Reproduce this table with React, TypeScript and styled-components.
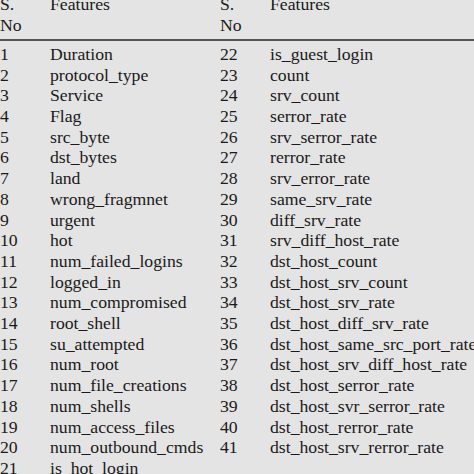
import React from 'react';
import styled, { createGlobalStyle } from 'styled-components';

const Global = createGlobalStyle`
  html, body {
    margin: 0;
    padding: 0;
    background: #e4e4e4;
    overflow: hidden;
  }
`;

const Page = styled.div`
  width: 474px;
  height: 474px;
  overflow: hidden;
  background: #e4e4e4;
  color: #1a1a1a;
  font-family: "Liberation Serif", "Times New Roman", serif;
  font-size: 17.7px;
  line-height: 20.7px;
`;

const Table = styled.div`
  margin-top: -6px;
`;

const Grid = styled.div`
  display: grid;
  grid-template-columns: 50px 170px 50px 1fr;
`;

const Head = styled(Grid)`
  padding-bottom: 3.5px;
  border-bottom: 2px solid #555;
`;

const Body = styled(Grid)`
  padding-top: 3px;
`;

const Cell = styled.div`
  white-space: nowrap;
`;

const features = [
  'Duration', 'protocol_type', 'Service', 'Flag', 'src_byte', 'dst_bytes', 'land',
  'wrong_fragmnet', 'urgent', 'hot', 'num_failed_logins', 'logged_in', 'num_compromised',
  'root_shell', 'su_attempted', 'num_root', 'num_file_creations', 'num_shells',
  'num_access_files', 'num_outbound_cmds', 'is_hot_login', 'is_guest_login', 'count',
  'srv_count', 'serror_rate', 'srv_serror_rate', 'rerror_rate', 'srv_error_rate',
  'same_srv_rate', 'diff_srv_rate', 'srv_diff_host_rate', 'dst_host_count',
  'dst_host_srv_count', 'dst_host_srv_rate', 'dst_host_diff_srv_rate',
  'dst_host_same_src_port_rate', 'dst_host_srv_diff_host_rate', 'dst_host_serror_rate',
  'dst_host_svr_serror_rate', 'dst_host_rerror_rate', 'dst_host_srv_rerror_rate',
];

export default function App() {
  const rows = [];
  for (let i = 0; i < 21; i++) {
    const j = i + 21;
    rows.push(
      <React.Fragment key={i}>
        <Cell>{i + 1}</Cell>
        <Cell>{features[i]}</Cell>
        <Cell>{j < 41 ? j + 1 : ''}</Cell>
        <Cell>{j < 41 ? features[j] : ''}</Cell>
      </React.Fragment>
    );
  }
  return (
    <Page>
      <Global />
      <Table>
        <Head>
          <Cell>S.<br />No</Cell>
          <Cell>Features</Cell>
          <Cell>S.<br />No</Cell>
          <Cell>Features</Cell>
        </Head>
        <Body>{rows}</Body>
      </Table>
    </Page>
  );
}
